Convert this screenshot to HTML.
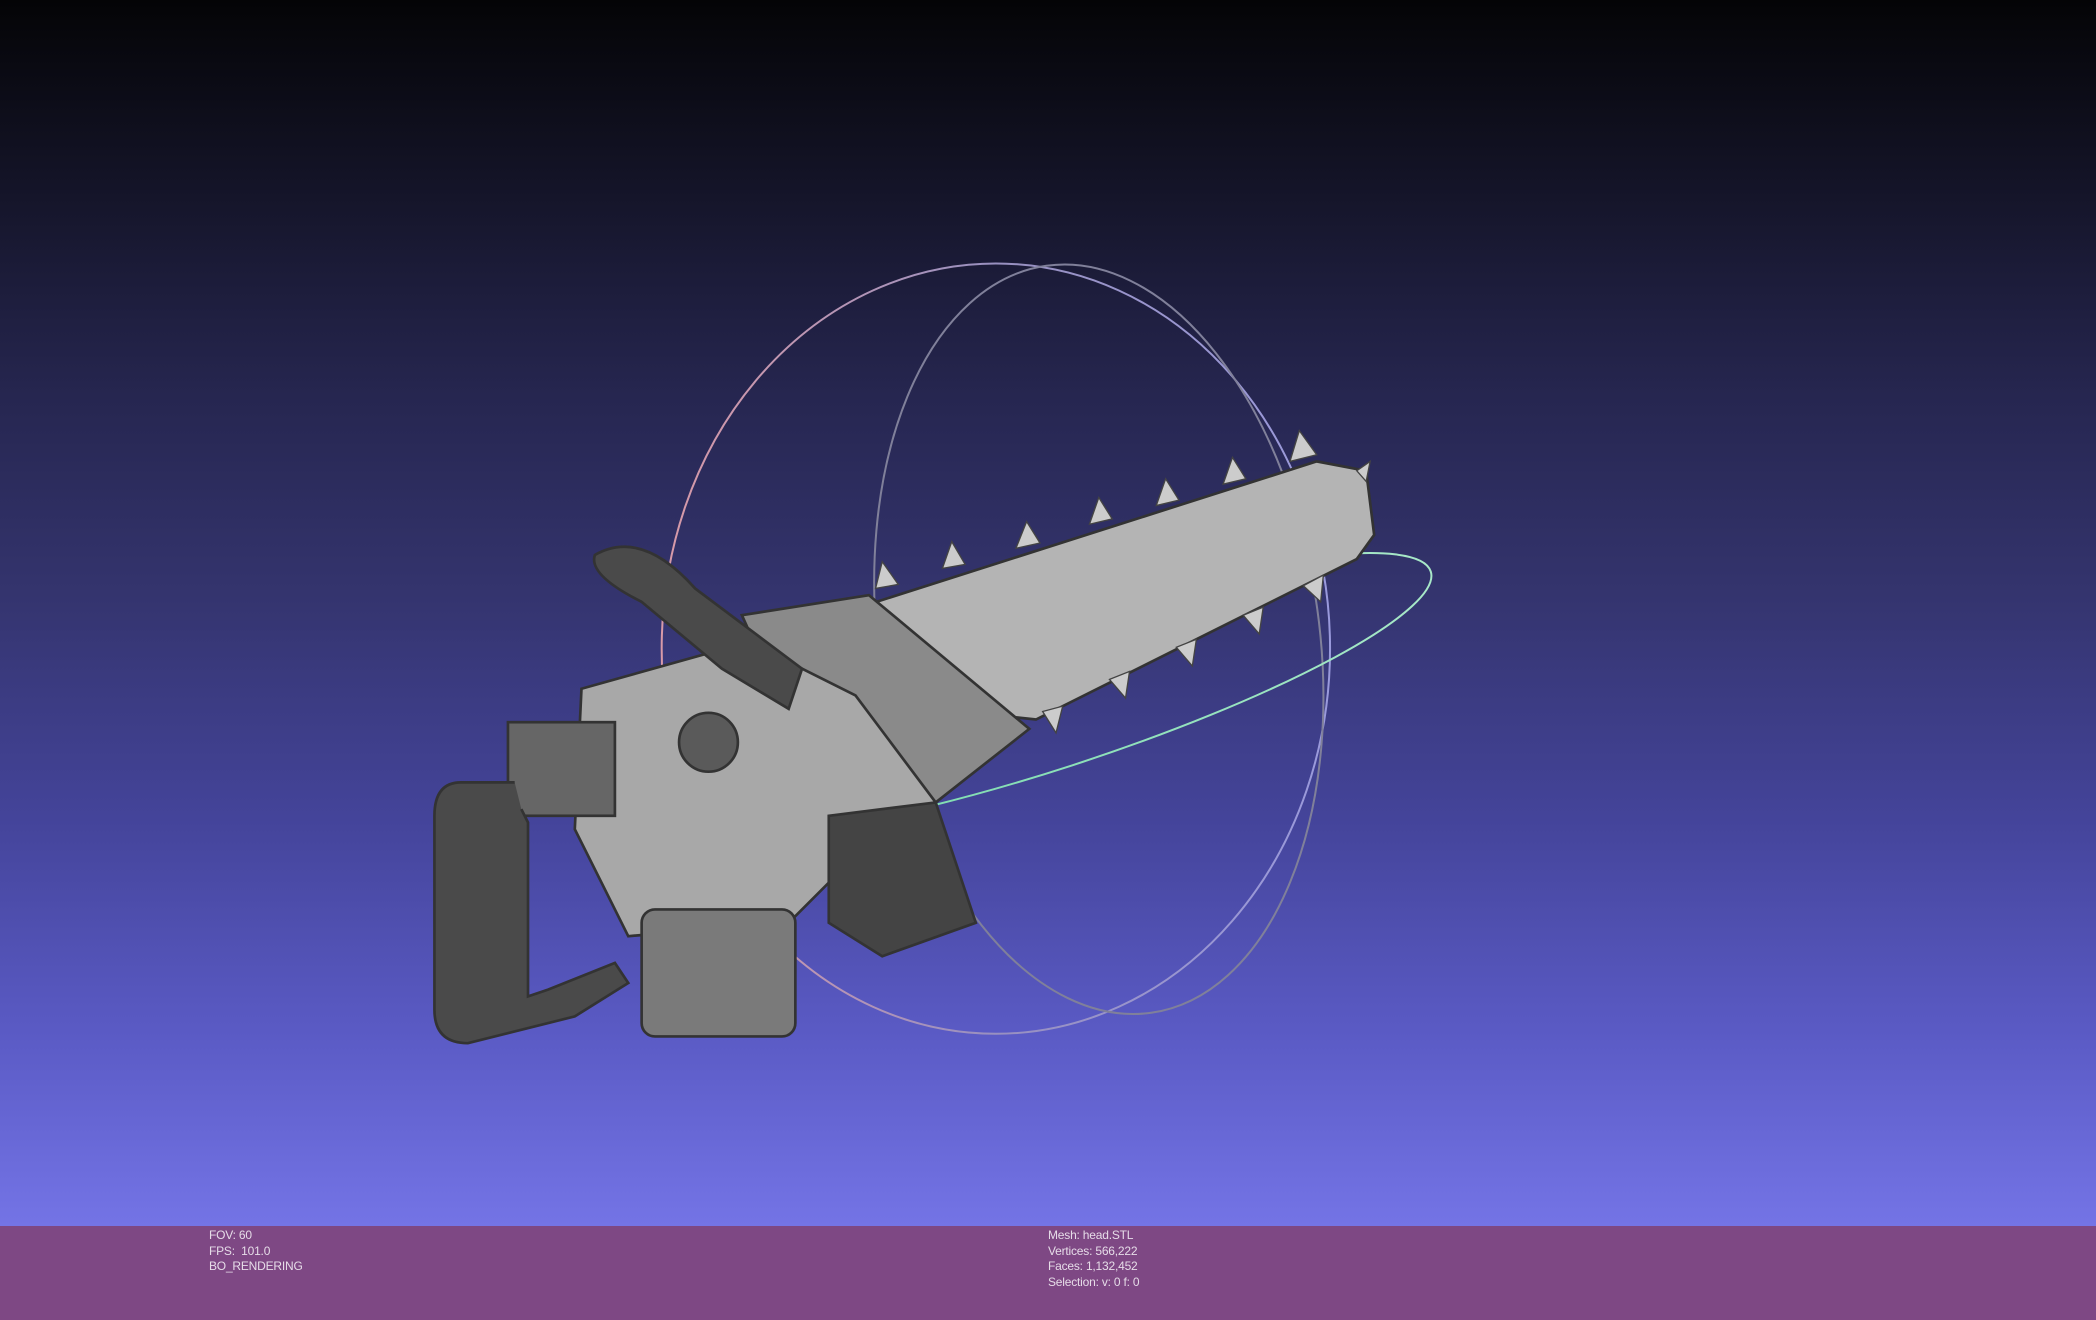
<!DOCTYPE html>
<html><head><meta charset="utf-8"><style>
html,body{margin:0;padding:0;}
body{width:2096px;height:1320px;position:relative;overflow:hidden;
background:linear-gradient(to bottom,#040406 0%,#15152a 15%,#262650 30%,#34346e 45%,#44449a 62%,#5a5ac4 78%,#7474e6 93%,#7676e8 100%);
font-family:"Liberation Sans",sans-serif;}
#bar{position:absolute;left:0;top:1226px;width:2096px;height:94px;background:#7e4884;color:#e6dce8;font-size:12px;line-height:15.6px;letter-spacing:-0.2px;}
.col{position:absolute;top:2px;}
svg{position:absolute;left:0;top:0;}
</style></head><body>
<svg width="2096" height="1320" viewBox="0 0 1568 987" preserveAspectRatio="none">
<defs>
<linearGradient id="g1" x1="0" y1="0" x2="1" y2="0"><stop offset="0" stop-color="#d89aa8"/><stop offset="0.5" stop-color="#9890c0"/><stop offset="1" stop-color="#9a9adc"/></linearGradient>
<linearGradient id="g2" x1="0" y1="0" x2="1" y2="0"><stop offset="0" stop-color="#70d8a8"/><stop offset="1" stop-color="#a8e8c8"/></linearGradient>
</defs>
<ellipse cx="745" cy="485" rx="250" ry="288" fill="none" stroke="url(#g1)" stroke-width="1.5"/>
<ellipse cx="822" cy="478" rx="165" ry="282" transform="rotate(-8 822 478)" fill="none" stroke="#80809a" stroke-width="1.5"/>
<ellipse cx="785" cy="520" rx="300" ry="55" transform="rotate(-18 785 520)" fill="none" stroke="url(#g2)" stroke-width="1.5"/>
<g stroke="#333" stroke-width="2">
<polygon points="640,455 985,345 1022,352 1028,400 1015,418 775,538 700,530" fill="#b4b4b4"/>
<polygon points="555,460 650,445 770,545 700,600 600,560" fill="#8a8a8a"/>
<polygon points="435,515 560,480 640,520 700,600 640,640 590,690 470,700 430,620" fill="#a8a8a8"/>
<rect x="380" y="540" width="80" height="70" fill="#666"/>
<path d="M385,585 L345,585 Q325,585 325,610 L325,755 Q325,780 350,780 L430,760 L470,735 L460,720 L410,740 L395,745 L395,615 L390,605" fill="#4a4a4a"/>
<rect x="480" y="680" width="115" height="95" rx="10" fill="#7a7a7a"/>
<polygon points="620,610 700,600 730,690 660,715 620,690" fill="#444"/>
<path d="M445,415 Q480,395 520,440 L600,500 L590,530 L540,500 L480,450 Q440,430 445,415Z" fill="#4a4a4a"/>
<circle cx="530" cy="555" r="22" fill="#5a5a5a"/>
</g>
<g fill="#ccc" stroke="#444" stroke-width="1">
<polygon points="655,440 660,420 672,437"/><polygon points="705,425 712,405 722,422"/><polygon points="760,410 768,390 778,406"/><polygon points="815,392 822,372 832,388"/><polygon points="865,378 872,358 882,374"/><polygon points="915,362 922,342 932,358"/><polygon points="965,345 972,322 985,340"/><polygon points="1015,352 1025,345 1022,360"/>
<polygon points="780,532 790,548 795,528"/><polygon points="830,508 842,522 845,502"/><polygon points="880,484 892,498 895,478"/><polygon points="930,460 942,474 945,454"/><polygon points="975,438 988,450 990,430"/>
</g>
</svg>
<div id="bar">
<div class="col" style="left:209px">FOV: 60<br>FPS:&nbsp; 101.0<br>BO_RENDERING</div>
<div class="col" style="left:1048px">Mesh: head.STL<br>Vertices: 566,222<br>Faces: 1,132,452<br>Selection: v: 0 f: 0</div>
</div>
</body></html>
